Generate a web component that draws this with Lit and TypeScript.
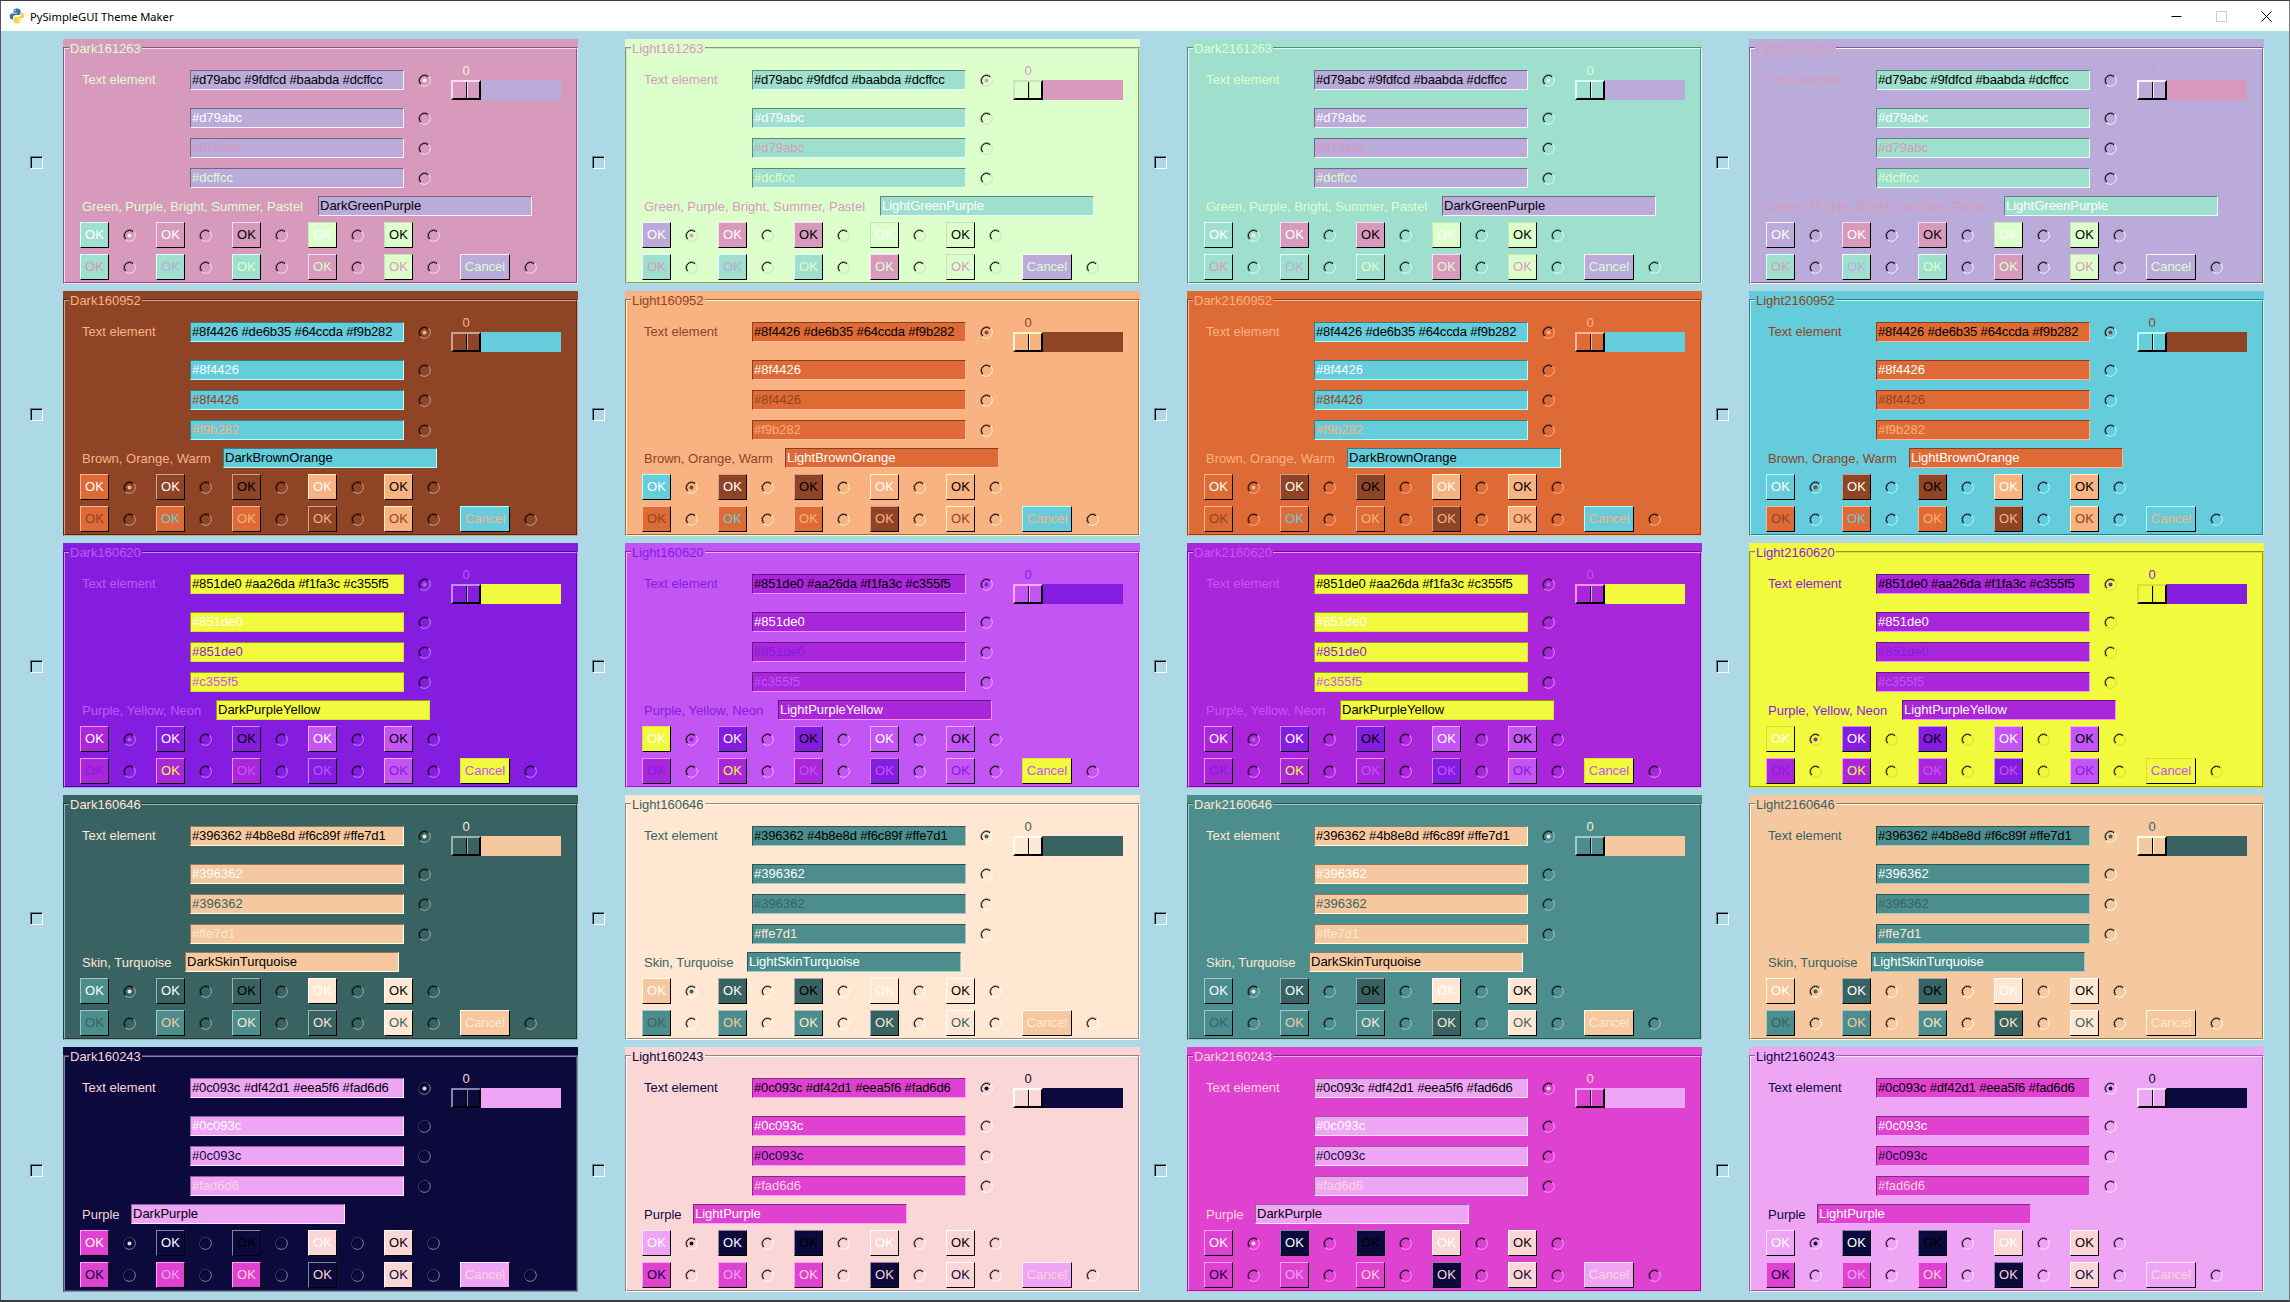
import { LitElement, html, css, svg } from "lit";
import { customElement } from "lit/decorators.js";

type RGB = [number, number, number];
const rgb = (h: string): RGB => [1, 3, 5].map((i) => parseInt(h.slice(i, i + 2), 16)) as RGB;
const hex = (c: number[]) => `rgb(${c.map((v) => Math.round(Math.min(255, v))).join(",")})`;

function lo(h: string) {
  const c = rgb(h);
  const b = 0.5 * (c[0] / 255) ** 2 + (c[1] / 255) ** 2 + 0.3 * (c[2] / 255) ** 2;
  if (b < 0.05) return hex(c.map((v) => (255 + 3 * v) / 4));
  return hex(c.map((v) => v * 0.6));
}
function hi(h: string) {
  const c = rgb(h);
  if (c[1] > 242) return hex(c.map((v) => v * 0.9));
  return hex(c.map((v) => Math.max(v * 1.4, (255 + v) / 2)));
}

interface Row { id: string; c: string[]; tags: string; name: string; tagW: number; }
const ROWS: Row[] = [
  { id: "161263", c: ["#d79abc", "#9fdfcd", "#baabda", "#dcffcc"], tags: "Green, Purple, Bright, Summer, Pastel", name: "GreenPurple", tagW: 224 },
  { id: "160952", c: ["#8f4426", "#de6b35", "#64ccda", "#f9b282"], tags: "Brown, Orange, Warm", name: "BrownOrange", tagW: 129 },
  { id: "160620", c: ["#851de0", "#aa26da", "#f1fa3c", "#c355f5"], tags: "Purple, Yellow, Neon", name: "PurpleYellow", tagW: 122 },
  { id: "160646", c: ["#396362", "#4b8e8d", "#f6c89f", "#ffe7d1"], tags: "Skin, Turquoise", name: "SkinTurquoise", tagW: 91 },
  { id: "160243", c: ["#0c093c", "#df42d1", "#eea5f6", "#fad6d6"], tags: "Purple", name: "Purple", tagW: 37 },
];

interface Variant { prefix: string; word: string; bg: number; fg: number; input: number; trough: number; btn: number; nameColor: string; }
const VARIANTS: Variant[] = [
  { prefix: "Dark", word: "Dark", bg: 0, fg: 3, input: 2, trough: 2, btn: 1, nameColor: "#000" },
  { prefix: "Light", word: "Light", bg: 3, fg: 0, input: 1, trough: 0, btn: 2, nameColor: "#fff" },
  { prefix: "Dark2", word: "Dark", bg: 1, fg: 3, input: 2, trough: 2, btn: 1, nameColor: "#000" },
  { prefix: "Light2", word: "Light", bg: 2, fg: 0, input: 1, trough: 0, btn: 2, nameColor: "#fff" },
];

const radio = (on = false) => html`<svg class="radio" viewBox="0 0 13 13" aria-hidden="true">
  ${svg`<path d="M2.26 10.74A6 6 0 0 1 10.74 2.26" fill="none" stroke="var(--lo)"/>
  <path d="M10.74 2.26A6 6 0 0 1 2.26 10.74" fill="none" stroke="var(--hi)"/>
  <path d="M2.96 10.04A5 5 0 0 1 10.04 2.96" fill="none" stroke="#000"/>`}
  ${on ? svg`<circle cx="6.5" cy="6.5" r="2" fill="var(--fg)"/>` : ""}
</svg>`;

@customElement("app-root")
export class AppRoot extends LitElement {
  static styles = css`
    :host { display: block; width: 2290px; height: 1302px; overflow: hidden; font-family: "Liberation Sans", Arial, sans-serif; font-size: 13px; }
    .window { box-sizing: border-box; width: 2290px; height: 1302px; background: #add8e6; border: 1px solid #3c3c3c; border-bottom-width: 2px; border-right-color: #777; border-left-color: #555; display: flex; flex-direction: column; }
    .titlebar { height: 30px; flex: none; background: #fff; display: flex; align-items: center; font-family: "Noto Sans", sans-serif; font-size: 11.2px; color: #000; }
    .logo { width: 16px; height: 16px; margin-left: 8px; margin-right: 5px; }
    .title { flex: 1; }
    .ctl { width: 45px; height: 30px; display: flex; align-items: center; justify-content: center; }
    .ctl svg { width: 11px; height: 11px; }
    .grid { display: grid; grid-template-columns: repeat(4, 562px); grid-auto-rows: 245px; row-gap: 7px; padding: 8px 0 0 29px; }
    .cell { display: flex; align-items: center; gap: 20px; }
    .check { box-sizing: border-box; width: 13px; height: 13px; flex: none; margin-top: 2px; border: 1px solid; border-color: #68818a #fff #fff #68818a; box-shadow: inset 1px 1px 0 #000; }
    .frame { width: 515px; height: 245px; flex: none; box-sizing: border-box; background: var(--bg); padding-top: 8px; color: var(--fg); display: flex; }
    .group { flex: 1; position: relative; border: 1px solid; border-color: var(--lo) var(--hi) var(--hi) var(--lo); display: flex; }
    .inner { flex: 1; border: 1px solid; border-color: var(--hi) var(--lo) var(--lo) var(--hi); padding: 13px 0 0 17px; }
    .legend { position: absolute; left: 5px; top: -7px; padding: 0 1px; line-height: 16px; background: var(--bg); }
    .top { display: flex; }
    .fields { display: grid; grid-template-columns: 108px 214px 47px; grid-template-rows: 28px 20px 20px 20px; row-gap: 10px; padding-top: 8px; align-items: center; }
    .fields .first { align-self: start; height: 20px; }
    .fields .radiocell { display: flex; align-items: center; }
    .fields .lab { line-height: 20px; }
    .fields .radio { margin-left: 14px; }
    .input { box-sizing: border-box; height: 20px; background: var(--input); border: 1px solid; border-color: var(--ilo) var(--ihi) var(--ihi) var(--ilo); padding-left: 1px; line-height: 18px; white-space: nowrap; overflow: hidden; }
    .input.swatches { letter-spacing: -0.14px; }
    .radio { width: 13px; height: 13px; flex: none; display: block; }
    .sliderbox { width: 110px; display: flex; flex-direction: column; }
    .zero { height: 18px; line-height: 17px; width: 30px; text-align: center; }
    .trough { height: 20px; background: var(--trough); display: flex; }
    .thumb { box-sizing: border-box; width: 30px; height: 20px; background: var(--bg); border: 2px solid; border-color: var(--hi) #000 #000 var(--hi); display: flex; justify-content: center; }
    .thumb i { display: block; width: 1px; background: #000; border-right: 1px solid var(--hi); margin-left: 1px; }
    .tagrow { display: flex; align-items: center; gap: 12px; margin-top: 8px; height: 20px; }
    .tagrow .tag { white-space: nowrap; }
    .tagrow .input { width: 214px; }
    .btnrow { display: flex; margin: 6px 0 0 -2px; height: 26px; }
    .pair { display: flex; align-items: center; gap: 14px; margin-right: 20px; }
    .btn { box-sizing: border-box; width: 29px; height: 26px; border: 1px solid; border-color: var(--bh) #000 #000 var(--bh); background: var(--b); color: var(--t); text-align: center; line-height: 24px; }
    .btn.wide { width: 50px; }
  `;

  private button(bg: string, text: string, label = "OK", wide = false, on = false) {
    return html`<div class="pair">
      <div class="btn ${wide ? "wide" : ""}" style="--b:${bg};--t:${text};--bh:${hi(bg)}">${label}</div>
      ${radio(on)}
    </div>`;
  }

  private frame(row: Row, v: Variant) {
    const c = row.c;
    const bg = c[v.bg], fg = c[v.fg], inp = c[v.input];
    const vars = `--bg:${bg};--fg:${fg};--hi:${hi(bg)};--lo:${lo(bg)};--input:${inp};--ihi:${hi(inp)};--ilo:${lo(inp)};--trough:${c[v.trough]}`;
    return html`<div class="cell">
      <div class="check"></div>
      <div class="frame" style=${vars}>
        <div class="group">
          <div class="legend">${v.prefix}${row.id}</div>
          <div class="inner">
            <div class="top">
              <div class="fields">
                <div class="lab first">Text element</div>
                <div class="input first swatches" style="color:#000">${c.join(" ")}</div>
                <div class="first radiocell">${radio(true)}</div>
                <div></div>
                <div class="input" style="color:#fff">${c[0]}</div>
                ${radio()}
                <div></div>
                <div class="input" style="color:${c[0]}">${c[0]}</div>
                ${radio()}
                <div></div>
                <div class="input" style="color:${c[3]}">${c[3]}</div>
                ${radio()}
              </div>
              <div class="sliderbox">
                <div class="zero">0</div>
                <div class="trough"><div class="thumb"><i></i></div></div>
              </div>
            </div>
            <div class="tagrow">
              <div class="tag" style="width:${row.tagW}px">${row.tags}</div>
              <div class="input" style="color:${v.nameColor}">${v.word}${row.name}</div>
            </div>
            <div class="btnrow">
              ${this.button(c[v.btn], "#fff", "OK", false, true)}
              ${this.button(c[0], "#fff")}
              ${this.button(c[0], "#000")}
              ${this.button(c[3], "#fff")}
              ${this.button(c[3], "#000")}
            </div>
            <div class="btnrow">
              ${this.button(c[1], c[0])}
              ${this.button(c[1], c[2])}
              ${this.button(c[1], c[3])}
              ${this.button(c[0], c[3])}
              ${this.button(c[3], c[0])}
              ${this.button(c[2], c[3], "Cancel", true)}
            </div>
          </div>
        </div>
      </div>
    </div>`;
  }

  render() {
    return html`<div class="window">
      <div class="titlebar">
        <svg class="logo" viewBox="0 0 16 16" aria-hidden="true">
          <path fill="#3776ab" d="M7.9 .6C5 .6 4.5 1.7 4.5 3v1.8h3.6v.6H3C1.6 5.4.7 6.6.7 8.2c0 1.8.8 3 2.1 3h1.3V9.5c0-1.3 1.1-2.4 2.4-2.4h3.2c1 0 1.9-.9 1.9-2V3C11.6 1.7 10.5.6 7.9.6z"/>
          <path fill="#ffd43b" transform="rotate(180 8 8)" d="M7.9 .6C5 .6 4.5 1.7 4.5 3v1.8h3.6v.6H3C1.6 5.4.7 6.6.7 8.2c0 1.8.8 3 2.1 3h1.3V9.5c0-1.3 1.1-2.4 2.4-2.4h3.2c1 0 1.9-.9 1.9-2V3C11.6 1.7 10.5.6 7.9.6z"/>
          <circle cx="6" cy="2.5" r=".7" fill="#fff"/>
          <circle cx="10" cy="13.5" r=".7" fill="#fff"/>
        </svg>
        <div class="title">PySimpleGUI Theme Maker</div>
        <div class="ctl"><svg viewBox="0 0 11 11"><path d="M.5 5.5h10" stroke="#000" fill="none"/></svg></div>
        <div class="ctl"><svg viewBox="0 0 11 11"><path d="M.5 .5h10v10H.5z" stroke="#ccc" fill="none"/></svg></div>
        <div class="ctl"><svg viewBox="0 0 11 11"><path d="M.5 .5l10 10M10.5 .5l-10 10" stroke="#000" fill="none"/></svg></div>
      </div>
      <div class="grid">
        ${ROWS.map((r) => VARIANTS.map((v) => this.frame(r, v)))}
      </div>
    </div>`;
  }
}
